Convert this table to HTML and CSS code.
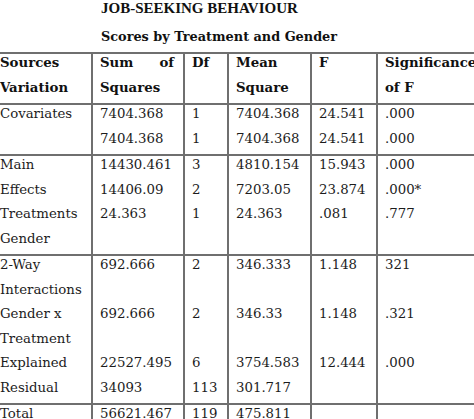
FILE: index.html
```html
<!DOCTYPE html>
<html>
<head>
<meta charset="utf-8">
<link rel="stylesheet" href="styles.css">
</head>
<body>
<div class="page">
  <h1 class="title">JOB-SEEKING BEHAVIOUR</h1>
  <h2 class="subtitle">Scores by Treatment and Gender</h2>
  <table class="anova">
    <colgroup>
      <col class="c1"><col class="c2"><col class="c3"><col class="c4"><col class="c5"><col class="c6">
    </colgroup>
    <thead>
      <tr>
        <th><div class="ln">Sources</div><div class="ln">Variation</div></th>
        <th><div class="ln spread"><span>Sum</span><span>of</span></div><div class="ln">Squares</div></th>
        <th><div class="ln">Df</div></th>
        <th><div class="ln">Mean</div><div class="ln">Square</div></th>
        <th><div class="ln">F</div></th>
        <th><div class="ln">Significance</div><div class="ln">of F</div></th>
      </tr>
    </thead>
    <tbody>
      <tr class="g1">
        <td><div class="ln">Covariates</div></td>
        <td><div class="ln">7404.368</div><div class="ln">7404.368</div></td>
        <td><div class="ln">1</div><div class="ln">1</div></td>
        <td><div class="ln">7404.368</div><div class="ln">7404.368</div></td>
        <td><div class="ln">24.541</div><div class="ln">24.541</div></td>
        <td><div class="ln">.000</div><div class="ln">.000</div></td>
      </tr>
      <tr class="g2">
        <td><div class="ln">Main</div><div class="ln">Effects</div><div class="ln">Treatments</div><div class="ln">Gender</div></td>
        <td><div class="ln">14430.461</div><div class="ln">14406.09</div><div class="ln">24.363</div></td>
        <td><div class="ln">3</div><div class="ln">2</div><div class="ln">1</div></td>
        <td><div class="ln">4810.154</div><div class="ln">7203.05</div><div class="ln">24.363</div></td>
        <td><div class="ln">15.943</div><div class="ln">23.874</div><div class="ln">.081</div></td>
        <td><div class="ln">.000</div><div class="ln">.000*</div><div class="ln">.777</div></td>
      </tr>
      <tr class="g3">
        <td><div class="ln">2-Way</div><div class="ln">Interactions</div><div class="ln">Gender x</div><div class="ln">Treatment</div><div class="ln">Explained</div><div class="ln">Residual</div></td>
        <td><div class="ln">692.666</div><div class="ln"></div><div class="ln">692.666</div><div class="ln"></div><div class="ln">22527.495</div><div class="ln">34093</div></td>
        <td><div class="ln">2</div><div class="ln"></div><div class="ln">2</div><div class="ln"></div><div class="ln">6</div><div class="ln">113</div></td>
        <td><div class="ln">346.333</div><div class="ln"></div><div class="ln">346.33</div><div class="ln"></div><div class="ln">3754.583</div><div class="ln">301.717</div></td>
        <td><div class="ln">1.148</div><div class="ln"></div><div class="ln">1.148</div><div class="ln"></div><div class="ln">12.444</div></td>
        <td><div class="ln">321</div><div class="ln"></div><div class="ln">.321</div><div class="ln"></div><div class="ln">.000</div></td>
      </tr>
      <tr class="g4">
        <td><div class="ln">Total</div></td>
        <td><div class="ln">56621.467</div></td>
        <td><div class="ln">119</div></td>
        <td><div class="ln">475.811</div></td>
        <td><div class="ln"></div></td>
        <td><div class="ln"></div></td>
      </tr>
    </tbody>
  </table>
</div>
</body>
</html>
```

FILE: styles.css
```css
html, body {
  margin: 0;
  padding: 0;
  background: #ffffff;
  overflow: hidden;
}

.page {
  width: 474px;
  height: 419px;
  overflow: hidden;
}

.title {
  margin: 0;
  padding-left: 101px;
  font-family: "Liberation Serif", "Times New Roman", serif;
  font-weight: bold;
  font-size: 15px;
  line-height: 17px;
  color: #111111;
}

.subtitle {
  margin: 11px 0 0 0;
  padding-left: 101px;
  font-family: "DejaVu Serif", serif;
  font-weight: bold;
  font-size: 12.85px;
  line-height: 17px;
  color: #111111;
}

.anova {
  margin: 7px 0 0 -9px;
  border-collapse: collapse;
  table-layout: fixed;
  width: 495px;
  font-family: "DejaVu Serif", serif;
  font-size: 13.3px;
  color: #1c1c1c;
}

.c1 { width: 100px; }
.c2 { width: 92px; }
.c3 { width: 44px; }
.c4 { width: 83px; }
.c5 { width: 66px; }
.c6 { width: 110px; }

.anova th,
.anova td {
  border: 2px solid #6f6f6f;
  padding: 0 9px 0 7px;
  vertical-align: top;
  text-align: left;
  white-space: nowrap;
}

.anova th {
  font-weight: bold;
  color: #111111;
}

.ln {
  height: 24.5px;
  line-height: 18.4px;
}

.spread {
  display: flex;
  justify-content: space-between;
}
```
